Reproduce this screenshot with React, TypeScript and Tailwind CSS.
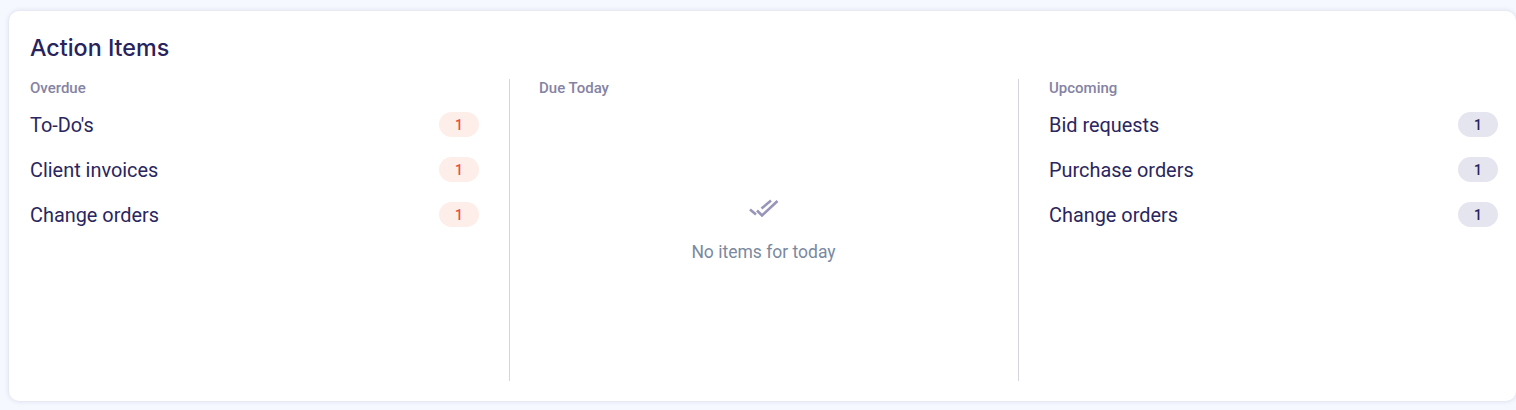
const overdue = ["To-Do's", 'Client invoices', 'Change orders'];
const upcoming = ['Bid requests', 'Purchase orders', 'Change orders'];

function Row({ label, tone }: { label: string; tone: 'red' | 'gray' }) {
  return (
    <div className="flex h-[45px] items-center justify-between">
      <span className="pt-[2px] text-[19.9px] leading-[24px] text-[#2a2660]">{label}</span>
      <span
        className={
          tone === 'red'
            ? 'flex h-[25px] w-10 items-center justify-center rounded-full bg-[#fdeeea] pt-px text-[14px] font-medium text-[#e8503a]'
            : 'flex h-[25px] w-10 items-center justify-center rounded-full bg-[#e4e5ee] pt-px text-[14px] font-medium text-[#27235c]'
        }
      >
        1
      </span>
    </div>
  );
}

function Heading({ children }: { children: string }) {
  return <div className="h-[23px] text-[15px] leading-[18px] font-medium text-[#8583a3]">{children}</div>;
}

export default function App() {
  return (
    <div className="h-[410px] overflow-hidden bg-[#f6f8ff] pt-[11px] pl-[9px] font-['Roboto',sans-serif]">
      <div className="h-[390px] rounded-[10px] bg-white pt-[21px] pr-[18px] pl-[21px] shadow-[0_0_5px_rgba(60,60,130,0.18)]">
        <h1 className="h-[47px] font-['Inter',sans-serif] text-[23.3px] leading-[32px] font-medium text-[#27235c]">Action Items</h1>
        <div className="flex h-[302px]">
          <div className="w-[480px] border-r border-[#d5d5e0] pr-[30px]">
            <Heading>Overdue</Heading>
            <div>
              {overdue.map(item => <Row key={item} label={item} tone="red" />)}
            </div>
          </div>
          <div className="flex w-[509px] flex-col border-r border-[#d5d5e0] pr-[30px] pl-[29px]">
            <Heading>Due Today</Heading>
            <div className="flex flex-col items-center pt-[96px]">
              <svg width="32" height="20" viewBox="748 198 32 20" fill="none" stroke="#9896b8" strokeWidth="2.6">
                <path d="M750 209.5l6 5" />
                <path d="M757 210.5l5 5L777.5 201" />
                <path d="M761.5 208.5L771 200.5" />
              </svg>
              <div className="mt-[22px] text-[17.5px] leading-[24px] text-[#7a899f]">No items for today</div>
            </div>
          </div>
          <div className="flex-1 pl-[30px]">
            <Heading>Upcoming</Heading>
            <div>
              {upcoming.map(item => <Row key={item} label={item} tone="gray" />)}
            </div>
          </div>
        </div>
      </div>
    </div>
  );
}
